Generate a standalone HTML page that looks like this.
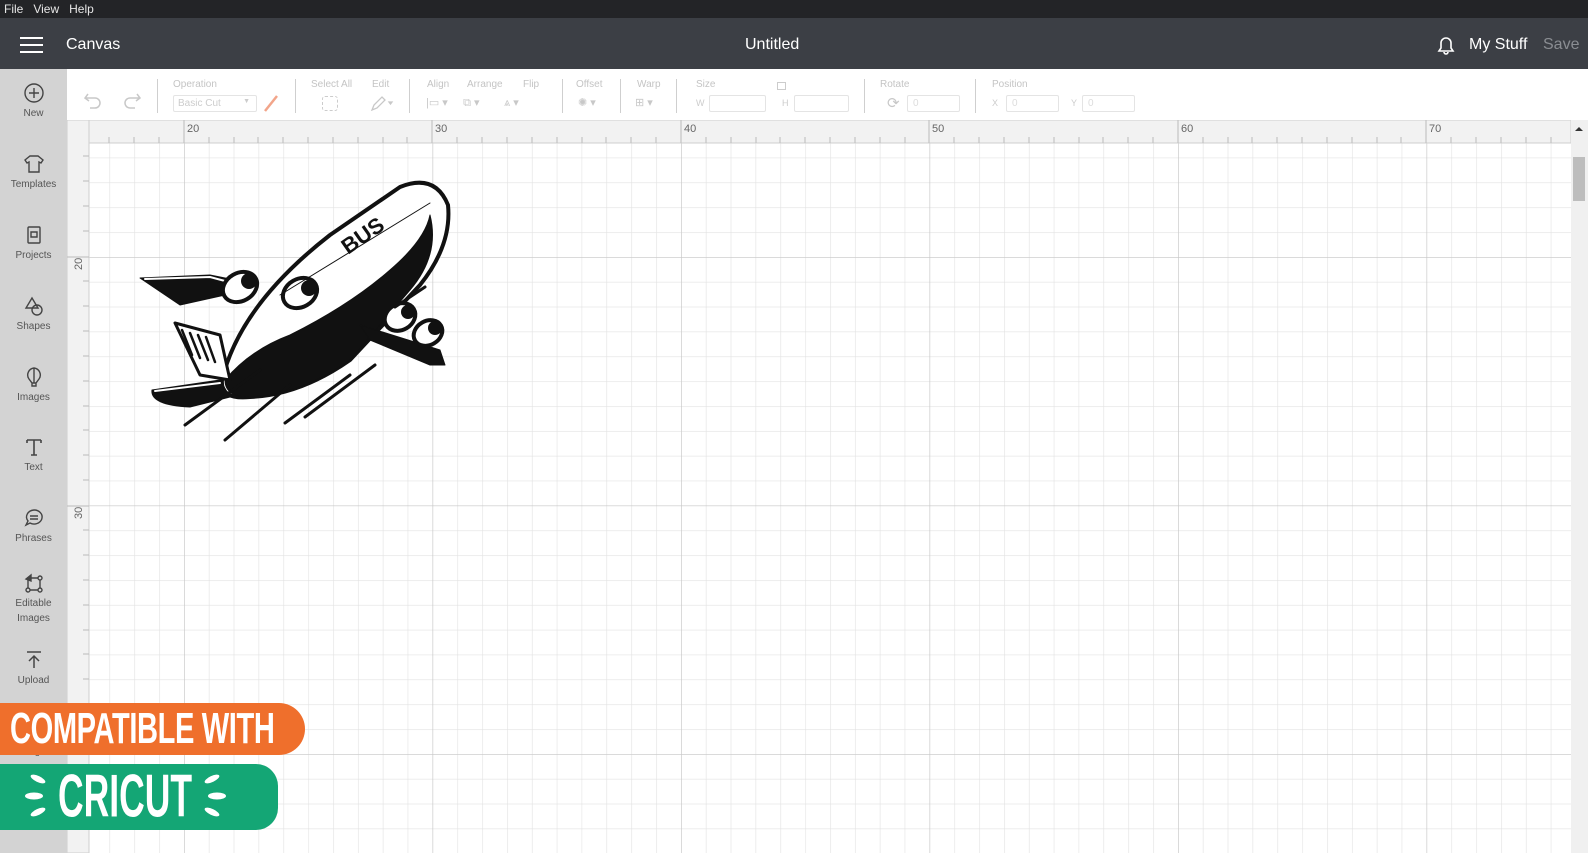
<!DOCTYPE html>
<html><head><meta charset="utf-8"><style>
*{margin:0;padding:0;box-sizing:border-box}
body{width:1588px;height:853px;overflow:hidden;position:relative;background:#fff;font-family:"Liberation Sans",sans-serif}
.a{position:absolute}
.lbl{position:absolute;font-size:10px;color:#c4c4c4;top:79px;white-space:nowrap}
.dv{position:absolute;top:79px;width:1px;height:34px;background:#cfcfcf}
.box{position:absolute;top:95px;height:17px;border:1px solid #e4e4e4;border-radius:2px}
.sb{position:absolute;left:0;width:67px;text-align:center;font-size:10px;color:#555}
.sb svg{display:block;margin:0 auto 4px}
</style></head><body>
<div class="a" style="left:0;top:0;width:1588px;height:18px;background:#232427"></div>
<div class="a" style="left:4px;top:2px;font-size:12px;color:#e6e6e6">File&nbsp;&nbsp;&nbsp;View&nbsp;&nbsp;&nbsp;Help</div>
<div class="a" style="left:0;top:18px;width:1588px;height:51px;background:#3c3f45"></div>
<div class="a" style="left:20px;top:37px;width:23px;height:2px;background:#fff;box-shadow:0 7px 0 #fff,0 14px 0 #fff"></div>
<div class="a" style="left:66px;top:36px;font-size:16px;color:#fff">Canvas</div>
<div class="a" style="left:745px;top:36px;font-size:16px;color:#fff">Untitled</div>
<svg class="a" style="left:1435px;top:34px" width="22" height="22" viewBox="0 0 22 22" fill="none" stroke="#fff" stroke-width="1.6"><path d="M4 17h14l-2-3V9a5 5 0 0 0-10 0v5z"/><path d="M9 18a2 2 0 0 0 4 0"/></svg>
<div class="a" style="left:1469px;top:36px;font-size:16px;color:#fff">My Stuff</div>
<div class="a" style="left:1543px;top:36px;font-size:16px;color:#8a8d92">Save</div>

<svg class="a" style="left:84px;top:90px" width="60" height="20" fill="none" stroke="#c8c8c8" stroke-width="1.5"><path d="M4 4 1 8l4 3M2 8h9a5 5 0 0 1 0 10H6"/><path d="M53 4l3 4-4 3M55 8h-9a5 5 0 0 0 0 10h5"/></svg>
<div class="dv" style="left:157px"></div>
<div class="lbl" style="left:173px">Operation</div>
<div class="box" style="left:173px;width:84px;font-size:10px;color:#ccc;padding:2px 4px">Basic Cut<span style="position:absolute;right:6px;font-size:7px">▼</span></div>
<svg class="a" style="left:263px;top:94px" width="16" height="18"><path d="M2 17 14 2" stroke="#f2a58a" stroke-width="2.5"/></svg>
<div class="dv" style="left:295px"></div>
<div class="lbl" style="left:311px">Select All</div>
<div class="a" style="left:322px;top:96px;width:16px;height:15px;border:1.5px dashed #ccc;border-radius:3px"></div>
<div class="lbl" style="left:372px">Edit</div>
<svg class="a" style="left:370px;top:95px" width="26" height="16" fill="none" stroke="#c8c8c8" stroke-width="1.3"><path d="M2 15l2-5 8-8 3 3-8 8z"/><path d="M19 7l3 0-1.5 2z" fill="#c8c8c8"/></svg>
<div class="dv" style="left:409px"></div>
<div class="lbl" style="left:427px">Align</div>
<div class="lbl" style="left:467px">Arrange</div>
<div class="lbl" style="left:523px">Flip</div>
<div class="a" style="left:426px;top:96px;font-size:11px;color:#c8c8c8;white-space:nowrap">|▭ ▾&nbsp;&nbsp;&nbsp;&nbsp;&nbsp;⧉ ▾&nbsp;&nbsp;&nbsp;&nbsp;&nbsp;&nbsp;&nbsp;&nbsp;⩓ ▾</div>
<div class="dv" style="left:562px"></div>
<div class="lbl" style="left:576px">Offset</div>
<div class="a" style="left:578px;top:96px;font-size:11px;color:#c8c8c8">✺ ▾</div>
<div class="dv" style="left:620px"></div>
<div class="lbl" style="left:637px">Warp</div>
<div class="a" style="left:635px;top:96px;font-size:11px;color:#c8c8c8">⊞ ▾</div>
<div class="dv" style="left:676px"></div>
<div class="lbl" style="left:696px">Size</div>
<div class="a" style="left:696px;top:98px;font-size:9px;color:#ccc">W</div>
<div class="box" style="left:709px;width:57px"></div>
<div class="a" style="left:777px;top:82px;width:9px;height:8px;border:1.5px solid #ccc"></div>
<div class="a" style="left:782px;top:98px;font-size:9px;color:#ccc">H</div>
<div class="box" style="left:794px;width:55px"></div>
<div class="dv" style="left:864px"></div>
<div class="lbl" style="left:880px">Rotate</div>
<div class="a" style="left:887px;top:94px;font-size:15px;color:#c8c8c8">⟳</div>
<div class="box" style="left:907px;width:53px;font-size:10px;color:#ddd;padding:2px 5px">0</div>
<div class="dv" style="left:975px"></div>
<div class="lbl" style="left:992px">Position</div>
<div class="a" style="left:992px;top:98px;font-size:9px;color:#ccc">X</div>
<div class="box" style="left:1006px;width:53px;font-size:10px;color:#ddd;padding:2px 5px">0</div>
<div class="a" style="left:1071px;top:98px;font-size:9px;color:#ccc">Y</div>
<div class="box" style="left:1082px;width:53px;font-size:10px;color:#ddd;padding:2px 5px">0</div>

<div class="a" style="left:0;top:69px;width:67px;height:784px;background:#d3d3d3"></div>
<div class="sb" style="top:82px"><svg width="22" height="22" fill="none" stroke="#444" stroke-width="1.4"><circle cx="11" cy="11" r="9"/><path d="M11 6v10M6 11h10"/></svg>New</div>
<div class="sb" style="top:153px"><svg width="22" height="22" fill="none" stroke="#444" stroke-width="1.4"><path d="M7 3h8l5 4-2 3-2-1v10H6V9l-2 1-2-3z"/></svg>Templates</div>
<div class="sb" style="top:224px"><svg width="22" height="22" fill="none" stroke="#444" stroke-width="1.4"><rect x="5" y="3" width="12" height="16" rx="1"/><path d="M8 8h6v5H8z"/></svg>Projects</div>
<div class="sb" style="top:295px"><svg width="22" height="22" fill="none" stroke="#444" stroke-width="1.4"><path d="M9 3 3 13h12z"/><circle cx="14" cy="15" r="5"/></svg>Shapes</div>
<div class="sb" style="top:366px"><svg width="22" height="22" fill="none" stroke="#444" stroke-width="1.4"><path d="M11 2a7 7 0 0 0-5 11l3 4h4l3-4a7 7 0 0 0-5-11zM9 17h4v3H9zM11 2v15"/></svg>Images</div>
<div class="sb" style="top:436px"><svg width="22" height="22" fill="none" stroke="#444" stroke-width="1.6"><path d="M4 4h14M11 4v15M8 19h6M4 4v3M18 4v3"/></svg>Text</div>
<div class="sb" style="top:507px"><svg width="22" height="22" fill="none" stroke="#444" stroke-width="1.4"><path d="M11 3a8 7 0 1 1-4 13l-4 2 2-4A8 7 0 0 1 11 3zM7 9h8M7 12h8"/></svg>Phrases</div>
<div class="sb" style="top:573px;line-height:15px"><svg width="22" height="22" fill="none" stroke="#444" stroke-width="1.4" style="margin-bottom:1px"><path d="M5 5h12v12H5z"/><circle cx="5" cy="17" r="2" fill="#d3d3d3"/><circle cx="17" cy="17" r="2" fill="#d3d3d3"/><circle cx="17" cy="5" r="2" fill="#d3d3d3"/><path d="M3 6 8 2 8 8z" fill="#444"/></svg>Editable<br>Images</div>
<div class="sb" style="top:649px"><svg width="22" height="22" fill="none" stroke="#444" stroke-width="1.5"><path d="M4 3h14M11 19V7M6 12l5-5 5 5"/></svg>Upload</div>
<div class="sb" style="top:746px">Monogram</div>

<svg class="a" style="left:67px;top:120px" width="1521" height="733">
<defs>
<pattern id="mn" x="0" y="0" width="24.85" height="24.85" patternUnits="userSpaceOnUse" patternTransform="translate(117 137)"><path d="M0 0V24.85M0 0H24.85" stroke="#e2e2e2" stroke-width="1.2" fill="none"/></pattern>
<pattern id="mj" width="248.5" height="248.5" patternUnits="userSpaceOnUse" patternTransform="translate(117 137)"><path d="M0 0V248.5M0 0H248.5" stroke="#c8c8c8" stroke-width="1.3" fill="none"/></pattern>
</defs>
<rect x="22" y="23" width="1482" height="710" fill="#fff"/>
<rect x="22" y="23" width="1482" height="710" fill="url(#mn)"/>
<rect x="22" y="23" width="1482" height="710" fill="url(#mj)"/>
<rect x="0" y="0" width="1504" height="23" fill="#f2f2f2" stroke="#cfcfcf"/>
<rect x="0" y="0" width="22" height="733" fill="#f2f2f2" stroke="#cfcfcf"/>
<g stroke="#bbb" stroke-width="1">
<path d="M42 17V23M67 17V23M92 17V23M142 17V23M167 17V23M191 17V23M216 17V23M241 17V23M266 17V23M291 17V23M316 17V23M340 17V23M390 17V23M415 17V23M440 17V23M465 17V23M490 17V23M515 17V23M539 17V23M564 17V23M589 17V23M639 17V23M664 17V23M689 17V23M713 17V23M738 17V23M763 17V23M788 17V23M813 17V23M838 17V23M887 17V23M912 17V23M937 17V23M962 17V23M987 17V23M1012 17V23M1036 17V23M1061 17V23M1086 17V23M1136 17V23M1161 17V23M1185 17V23M1210 17V23M1235 17V23M1260 17V23M1285 17V23M1310 17V23M1334 17V23M1384 17V23M1409 17V23M1434 17V23M1459 17V23M1484 17V23"/>
<path d="M117 0V23M365 0V23M614 0V23M862 0V23M1111 0V23M1359 0V23"/>
<path d="M16 36H22M16 61H22M16 86H22M16 111H22M0 137H22M16 161H22M16 186H22M16 211H22M16 236H22M16 261H22M16 286H22M16 310H22M16 335H22M16 360H22M0 386H22M16 410H22M16 435H22M16 460H22M16 485H22M16 510H22M16 534H22M16 559H22M16 584H22M16 609H22M0 634H22M16 659H22M16 684H22M16 709H22"/>
</g>
<g font-size="11" fill="#666" font-family="Liberation Sans">
<text x="120" y="12">20</text><text x="368" y="12">30</text><text x="617" y="12">40</text><text x="865" y="12">50</text><text x="1114" y="12">60</text><text x="1362" y="12">70</text>
<text transform="translate(15 150) rotate(-90)">20</text><text transform="translate(15 399) rotate(-90)">30</text>
</g>
<rect x="1504" y="0" width="17" height="733" fill="#f0f0f0"/>
<path d="M1508 11l4-4 4 4z" fill="#333"/>
<rect x="1506" y="37" width="12" height="44" fill="#bdbdbd"/>
</svg>

<svg class="a" style="left:130px;top:175px" width="330" height="275" viewBox="0 0 330 275">
<g stroke="#111" stroke-linecap="round" stroke-linejoin="round">
<path d="M10 103 L80 100 L120 108 L95 120 L50 130 Z" fill="#111"/>
<path d="M15 104 L80 102 L110 110" fill="none" stroke="#fff" stroke-width="2"/>
<path d="M92 205 Q110 130 200 60 L270 12 Q305 -2 318 30 Q322 70 290 110 L220 185 Q170 220 120 222 Q90 225 92 205Z" fill="#fff" stroke-width="4"/>
<path d="M95 205 Q120 175 160 160 Q220 130 260 95 Q295 65 300 40 Q310 80 280 115 L220 185 Q170 220 120 222 Q95 222 95 205Z" fill="#111"/>
<path d="M45 148 L90 160 L100 205 L70 200 Z" fill="#fff" stroke-width="3"/>
<path d="M52 155l10 25M60 158l10 25M68 160l10 25M76 162l9 25" stroke-width="2.5"/>
<path d="M22 215 L90 205 L100 222 L60 232 Q20 230 22 215Z" fill="#111"/>
<path d="M25 216 L90 208" stroke="#fff" stroke-width="2" fill="none"/>
<path d="M230 150 L310 175 L315 190 L300 190 L240 165Z" fill="#111"/>
<g fill="#fff" stroke-width="4"><ellipse cx="110" cy="112" rx="18" ry="14" transform="rotate(-30 110 112)"/><ellipse cx="170" cy="118" rx="18" ry="14" transform="rotate(-30 170 118)"/><ellipse cx="270" cy="142" rx="16" ry="13" transform="rotate(-30 270 142)"/><ellipse cx="298" cy="158" rx="15" ry="12" transform="rotate(-30 298 158)"/></g>
<g fill="#111" stroke="none"><circle cx="119" cy="106" r="8"/><circle cx="179" cy="113" r="8"/><circle cx="278" cy="137" r="7"/><circle cx="305" cy="153" r="7"/></g>
<path d="M55 250L130 195M95 265L160 210M155 248L220 200M175 242L245 190M265 132L295 112" stroke-width="3"/>
<path d="M150 120 L300 28" stroke-width="1" fill="none"/>
<text x="0" y="0" transform="translate(218 80) rotate(-35)" font-family="Liberation Sans" font-weight="bold" font-size="22" fill="#111" stroke="none">BUS</text>
</g>
</svg>

<div class="a" style="left:0;top:703px;width:305px;height:52px;background:#ef6f2c;border-radius:0 26px 26px 0"></div>
<div class="a" style="left:10px;top:706px;font-family:'Liberation Sans',sans-serif;font-weight:bold;font-size:38px;color:#fff;transform:scale(0.765,1.15);transform-origin:left top;letter-spacing:-0.5px;line-height:40px;white-space:nowrap">COMPATIBLE WITH</div>
<div class="a" style="left:0;top:764px;width:278px;height:66px;background:#14a675;border-radius:0 22px 22px 0"></div>
<div class="a" style="left:58px;top:766px;font-family:'Liberation Sans',sans-serif;font-weight:bold;font-size:50px;color:#fff;transform:scale(0.71,1.2);transform-origin:left top;line-height:50px;white-space:nowrap">CRICUT</div>
<svg class="a" style="left:22px;top:772px" width="210" height="50" fill="#fff"><ellipse cx="16" cy="7" rx="8" ry="3" transform="rotate(25 16 7)"/><ellipse cx="12" cy="24" rx="9" ry="3.5"/><ellipse cx="16" cy="40" rx="8" ry="3" transform="rotate(-25 16 40)"/><ellipse cx="190" cy="7" rx="8" ry="3" transform="rotate(-25 190 7)"/><ellipse cx="195" cy="24" rx="9" ry="3.5"/><ellipse cx="190" cy="40" rx="8" ry="3" transform="rotate(25 190 40)"/></svg>
</body></html>
